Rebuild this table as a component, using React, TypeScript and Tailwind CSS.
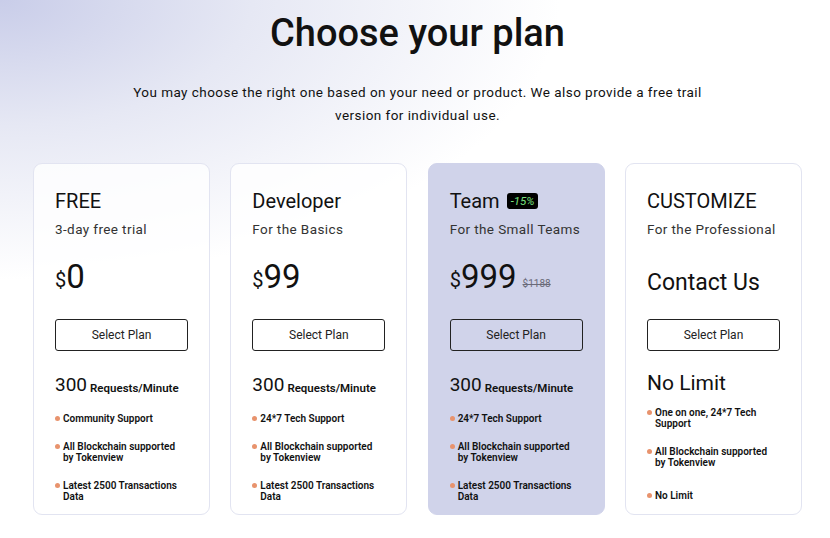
import React from "react";

type Plan = {
  name: string;
  sub: string;
  price?: string;
  oldPrice?: string;
  contact?: boolean;
  badge?: string;
  highlight?: boolean;
  limit?: boolean;
  items: string[][];
};

const plans: Plan[] = [
  {
    name: "FREE",
    sub: "3-day free trial",
    price: "0",
    items: [["Community Support"], ["All Blockchain supported", "by Tokenview"], ["Latest 2500 Transactions", "Data"]],
  },
  {
    name: "Developer",
    sub: "For the Basics",
    price: "99",
    items: [["24*7 Tech Support"], ["All Blockchain supported", "by Tokenview"], ["Latest 2500 Transactions", "Data"]],
  },
  {
    name: "Team",
    sub: "For the Small Teams",
    price: "999",
    oldPrice: "$1188",
    badge: "-15%",
    highlight: true,
    items: [["24*7 Tech Support"], ["All Blockchain supported", "by Tokenview"], ["Latest 2500 Transactions", "Data"]],
  },
  {
    name: "CUSTOMIZE",
    sub: "For the Professional",
    contact: true,
    limit: true,
    items: [["One on one, 24*7 Tech", "Support"], ["All Blockchain supported", "by Tokenview"], ["No Limit"]],
  },
];

function Card({ p }: { p: Plan }) {
  return (
    <div
      className={
        "flex h-[352px] w-[177px] flex-col rounded-[9px] px-[21px] pt-[24px] " +
        (p.highlight
          ? "bg-[#d0d3ea] border border-[#d0d3ea]"
          : "border border-[#e2e4f1] bg-white/80")
      }
    >
      <div className="flex h-[26px] items-center gap-[7px]">
        <span className="text-[20px] leading-none text-[#111]">{p.name}</span>
        {p.badge && (
          <span className="rounded-[3px] bg-black px-[4px] text-[11.5px] italic leading-[16px] text-[#79e07f]">
            {p.badge}
          </span>
        )}
      </div>
      <div className="mt-[6px] whitespace-nowrap text-[13.5px] leading-[18px] tracking-[0.4px] text-[#333]">{p.sub}</div>
      <div className="mt-[15px] flex h-[40px] items-end">
        {p.contact ? (
          <span className="mb-[-1px] text-[23px] leading-none text-[#111]">Contact Us</span>
        ) : (
          <>
            <span className="pb-[3px] text-[20px] leading-none text-[#111]">$</span>
            <span className="text-[33px] leading-none text-[#111]">{p.price}</span>
            {p.oldPrice && (
              <span className="mb-[4px] ml-[6px] text-[10px] leading-none text-[#6a6a78] line-through">
                {p.oldPrice}
              </span>
            )}
          </>
        )}
      </div>
      <button className="mt-[26px] h-[32px] w-full rounded-[3px] border-[1.5px] border-[#222] text-[12px] text-[#222]">
        Select Plan
      </button>
      <div className="mt-[21px] flex h-[22px] items-end">
        {p.limit ? (
          <span className="text-[21px] leading-none text-[#111]">No Limit</span>
        ) : (
          <>
            <span className="text-[19px] leading-none text-[#111]">300</span>
            <span className="ml-[3px] text-[11.5px] font-semibold leading-none text-[#111]">Requests/Minute</span>
          </>
        )}
      </div>
      <div className={"flex flex-col gap-[17px] " + (p.limit ? "mt-[13px]" : "mt-[19px]")}>
        {p.items.map((lines, i) => (
          <div
            key={i}
            className={"flex items-start " + (p.limit && i === 2 ? "mt-[5px]" : "")}
          >
            <span className="mt-[3px] mr-[3px] h-[5px] w-[5px] shrink-0 rounded-full bg-[#e8936d]" />
            <div className="text-[10px] font-semibold leading-[11px] text-[#111]">
              {lines.map((l, j) => (
                <div key={j}>{l}</div>
              ))}
            </div>
          </div>
        ))}
      </div>
    </div>
  );
}

export default function App() {
  return (
    <div
      className="relative h-[538px] w-[830px] overflow-hidden bg-white bg-[radial-gradient(ellipse_560px_280px_at_0%_0%,#c9cde9_0%,#e6e8f4_45%,#ffffff_100%)]"
      style={{ fontFamily: "Roboto, 'Liberation Sans', sans-serif" }}
    >
      <div className="ml-[33px] flex w-[769px] flex-col items-center">
        <h1 className="mt-[10px] text-[38px] font-medium leading-[46px] text-[#111]">Choose your plan</h1>
        <p className="mt-[25px] w-[600px] text-center text-[13.5px] leading-[23px] tracking-[0.45px] text-[#111]">
          You may choose the right one based on your need or product. We also provide a free trail version for individual use.
        </p>
        <div className="mt-[36px] flex w-full justify-between">
          {plans.map((p) => (
            <Card key={p.name} p={p} />
          ))}
        </div>
      </div>
    </div>
  );
}
